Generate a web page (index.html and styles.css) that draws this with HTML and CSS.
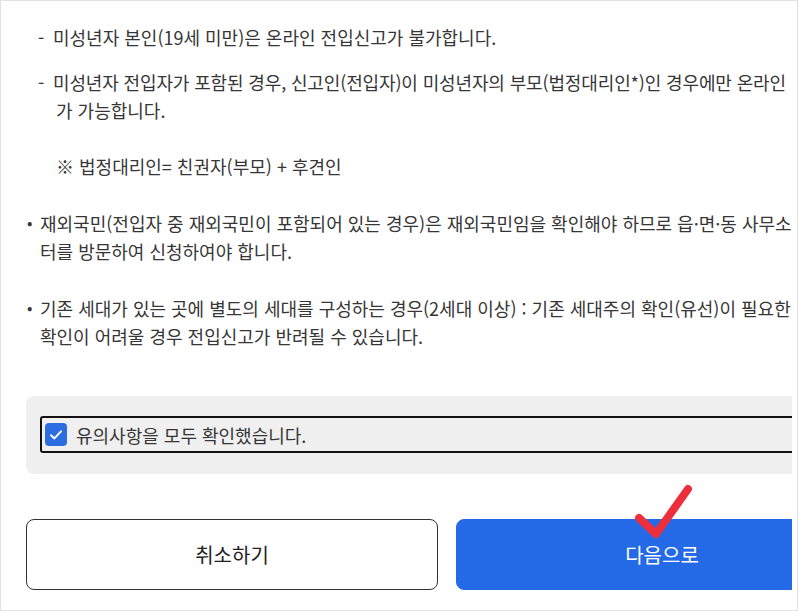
FILE: index.html
```html
<!DOCTYPE html>
<html lang="ko">
<head>
<meta charset="utf-8">
<link rel="stylesheet" href="styles.css">
</head>
<body>
<div class="frame">
  <div class="clip">
    <div class="content">
      <div class="notes">
        <div class="sub first"><span class="dash">-</span>미성년자 본인(19세 미만)은 온라인 전입신고가 불가합니다.</div>
        <div class="sub tight"><span class="dash">-</span>미성년자 전입자가 포함된 경우, 신고인(전입자)이 미성년자의 부모(법정대리인*)인 경우에만 온라인</div>
        <div class="cont">가 가능합니다.</div>
        <div class="ref">※ 법정대리인= 친권자(부모) + 후견인</div>
        <div class="bullet"><span class="dot">•</span>재외국민(전입자 중 재외국민이 포함되어 있는 경우)은 재외국민임을 확인해야 하므로 읍·면·동 사무소</div>
        <div class="bcont">터를 방문하여 신청하여야 합니다.</div>
        <div class="bullet"><span class="dot">•</span>기존 세대가 있는 곳에 별도의 세대를 구성하는 경우(2세대 이상) : 기존 세대주의 확인(유선)이 필요한</div>
        <div class="bcont">확인이 어려울 경우 전입신고가 반려될 수 있습니다.</div>
      </div>
      <div class="agree-box">
        <label class="agree">
          <span class="check">
            <svg width="14" height="12" viewBox="0 0 14 12"><path d="M2 6.2 L5.4 9.4 L12 2.4" fill="none" stroke="#fff" stroke-width="2" stroke-linecap="round" stroke-linejoin="round"/></svg>
          </span>
          <span class="agree-text">유의사항을 모두 확인했습니다.</span>
        </label>
      </div>
      <div class="actions">
        <button class="btn cancel">취소하기</button>
        <button class="btn next">다음으로</button>
      </div>
    </div>
  </div>
  <svg class="mark" width="70" height="62" viewBox="0 0 70 62"><polyline points="8,34 25,50 57,5" fill="none" stroke="#ec2f3b" stroke-width="8" stroke-linecap="round" stroke-linejoin="round"/></svg>
</div>
</body>
</html>
```
FILE: styles.css
```css
html, body {
  margin: 0;
  padding: 0;
  background: #fff;
}
body {
  font-family: "Noto Sans CJK KR", "Noto Sans", sans-serif;
  color: #363636;
}
.frame {
  position: relative;
  width: 798px;
  height: 611px;
  box-sizing: border-box;
  border: 1px solid #e2e2e2;
  overflow: hidden;
}
.clip {
  width: 791px;
  height: 609px;
  overflow: hidden;
}
.content {
  width: 842px;
  padding: 22px 0 0 25px;
}
.notes {
  font-size: 18px;
  line-height: 28px;
  white-space: nowrap;
}
.sub {
  padding-left: 12px;
  margin-top: 17px;
}
.sub.first {
  margin-top: 0;
}
.sub.tight {
  letter-spacing: -0.14px;
}
.dash {
  display: inline-block;
  width: 15px;
}
.cont {
  padding-left: 30px;
}
.ref {
  padding-left: 30px;
  margin-top: 28px;
}
.bullet {
  margin-top: 28px;
  padding-left: 1px;
}
.dot {
  display: inline-block;
  width: 13px;
  font-size: 16px;
  vertical-align: 2px;
}
.bcont {
  padding-left: 14px;
}
.agree-box {
  margin-top: 46px;
  background: #f0f0f0;
  border-radius: 8px;
  padding: 20px 0 21px 14px;
}
.agree {
  display: flex;
  align-items: center;
  height: 37px;
  box-sizing: border-box;
  border: 2px solid #111;
  border-radius: 3px;
  padding-left: 3px;
  font-size: 18px;
}
.check {
  width: 22px;
  height: 23px;
  border-radius: 4px;
  background: #2c6ee2;
  display: flex;
  align-items: center;
  justify-content: center;
  margin-right: 9px;
}
.actions {
  display: flex;
  gap: 18px;
  margin-top: 45px;
}
.btn {
  flex: 1;
  height: 71px;
  border-radius: 8px;
  font-family: "Noto Sans CJK KR", "Noto Sans", sans-serif;
  font-size: 20px;
  padding: 0;
}
.cancel {
  background: #fff;
  border: 1px solid #333;
  color: #222;
}
.next {
  background: #246ae6;
  border: 1px solid #246ae6;
  color: #fff;
}
.mark {
  position: absolute;
  left: 630px;
  top: 483px;
}
```
